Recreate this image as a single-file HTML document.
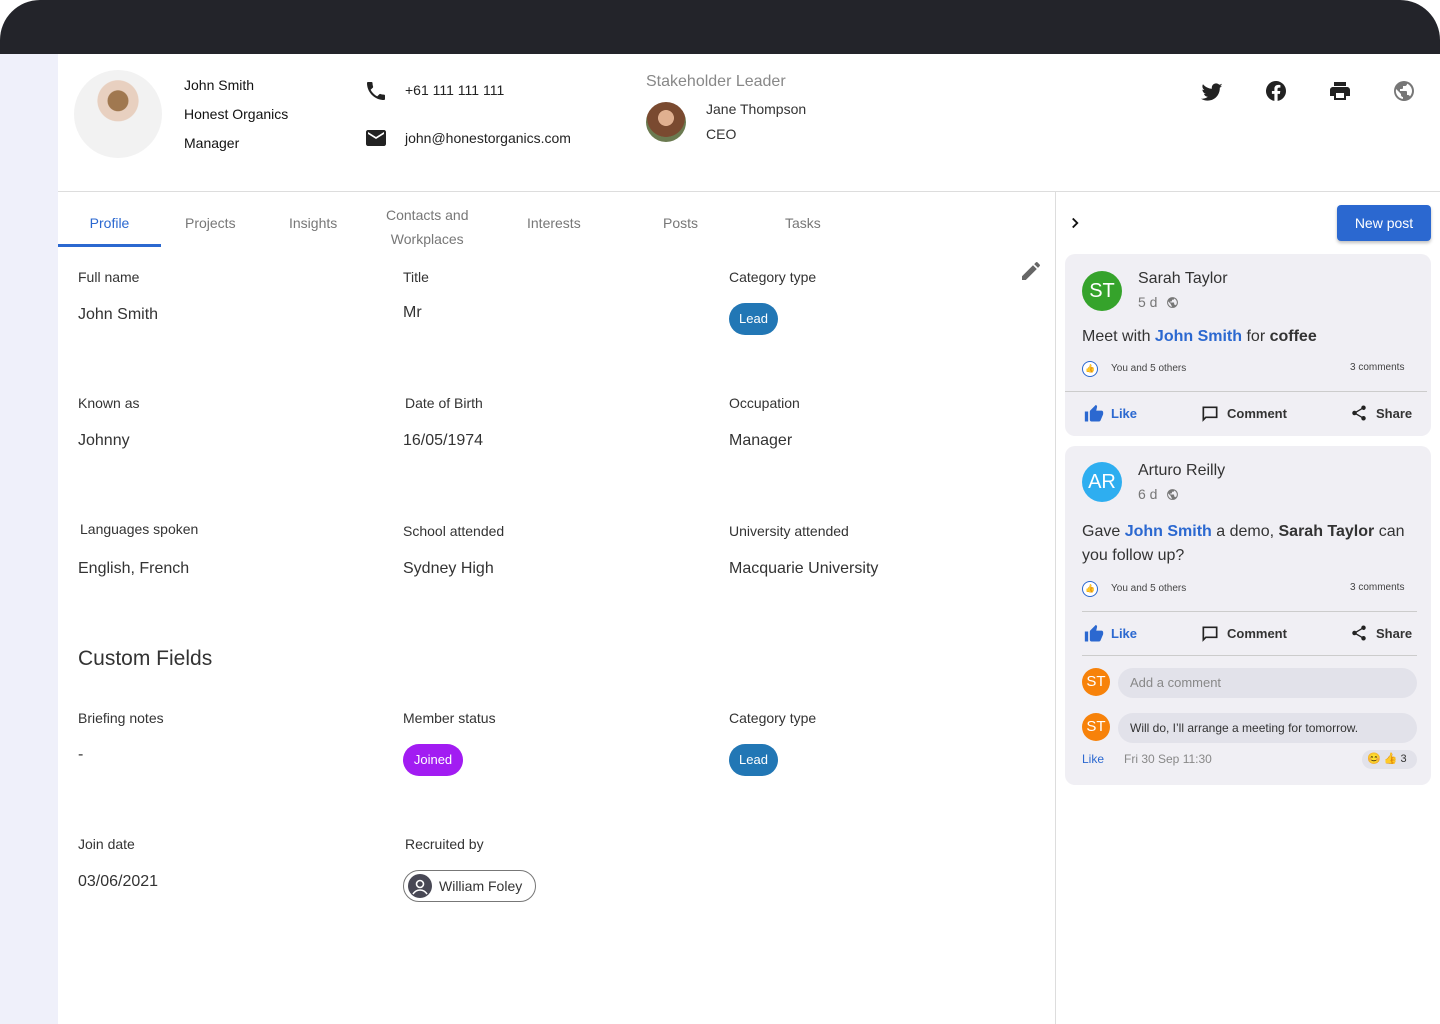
<!DOCTYPE html>
<html><head><meta charset="utf-8"><style>
*{margin:0;padding:0;box-sizing:border-box}
body{width:1440px;height:1024px;background:#fff;font-family:"Liberation Sans",Arial,sans-serif;color:#333;position:relative;overflow:hidden}
.a{position:absolute;white-space:nowrap}
.top{position:absolute;left:0;top:0;width:1440px;height:54px;background:#23242a;border-radius:40px 40px 0 0}
.side{position:absolute;left:0;top:54px;width:58px;height:970px;background:#eff0fa}
.lbl{font-size:14px;color:#333}
.val{font-size:16px;color:#333}
.tab{font-size:14px;color:#777;text-align:center}
.pill{position:absolute;height:32px;border-radius:16px;color:#fff;font-size:13px;line-height:32px;text-align:center}
.card{position:absolute;left:1065px;width:366px;background:#f0eff4;border-radius:10px}
.av{position:absolute;border-radius:50%;color:#fff;text-align:center}
.s{font-size:11px;color:#444}
.act{font-size:13px;color:#333;font-weight:bold}
</style></head><body>
<div class="top"></div>
<div class="side"></div>
<div class="a" style="left:58px;top:191px;width:1382px;height:1px;background:#ddd"></div>
<div class="a" style="left:1055px;top:192px;width:1px;height:832px;background:#ddd"></div>

<!-- header -->
<div class="a" style="left:74px;top:70px;width:88px;height:88px;border-radius:50%;background:radial-gradient(circle at 50% 35%,#a07850 0 14%,#e8d0c0 15% 28%,#f2f2f2 29%)"></div>
<div class="a" style="left:184px;top:77px;font-size:14px;color:#111">John Smith</div>
<div class="a" style="left:184px;top:106px;font-size:14px;color:#111">Honest Organics</div>
<div class="a" style="left:184px;top:135px;font-size:14px;color:#111">Manager</div>
<svg class="a" style="left:364px;top:79px" width="24" height="24" viewBox="0 0 24 24"><path fill="#222" d="M6.6 10.8c1.4 2.8 3.8 5.1 6.6 6.6l2.2-2.2c.3-.3.7-.4 1-.2 1.1.4 2.3.6 3.6.6.6 0 1 .4 1 1V20c0 .6-.4 1-1 1C10.6 21 3 13.4 3 4c0-.6.4-1 1-1h3.5c.6 0 1 .4 1 1 0 1.3.2 2.5.6 3.6.1.3 0 .7-.2 1z"/></svg>
<div class="a" style="left:405px;top:82px;font-size:14px;color:#222">+61 111 111 111</div>
<svg class="a" style="left:364px;top:126px" width="24" height="24" viewBox="0 0 24 24"><path fill="#222" d="M20 4H4c-1.1 0-2 .9-2 2v12c0 1.1.9 2 2 2h16c1.1 0 2-.9 2-2V6c0-1.1-.9-2-2-2zm0 4-8 5-8-5V6l8 5 8-5z"/></svg>
<div class="a" style="left:405px;top:130px;font-size:14px;color:#222">john@honestorganics.com</div>
<div class="a" style="left:646px;top:73px;font-size:16px;color:#888">Stakeholder Leader</div>
<div class="a" style="left:646px;top:102px;width:40px;height:40px;border-radius:50%;background:radial-gradient(circle at 50% 40%,#e0b090 0 25%,#7a4a30 26% 60%,#6b7a50 61%)"></div>
<div class="a" style="left:706px;top:101px;font-size:14px;color:#333">Jane Thompson</div>
<div class="a" style="left:706px;top:126px;font-size:14px;color:#333">CEO</div>
<svg class="a" style="left:1200px;top:80px" width="24" height="24" viewBox="0 0 24 24"><path fill="#222" d="M22.5 5.5c-.8.4-1.6.6-2.5.7.9-.5 1.6-1.4 1.9-2.4-.8.5-1.8.8-2.7 1-.8-.9-1.9-1.4-3.1-1.4-2.4 0-4.3 1.9-4.3 4.3 0 .3 0 .7.1 1-3.6-.2-6.8-1.9-8.9-4.5-.4.6-.6 1.4-.6 2.2 0 1.5.8 2.8 1.9 3.6-.7 0-1.4-.2-1.9-.5 0 2.1 1.5 3.9 3.4 4.2-.4.1-.7.2-1.1.2-.3 0-.5 0-.8-.1.5 1.7 2.1 3 4 3-1.5 1.2-3.3 1.9-5.3 1.9H1c1.9 1.2 4.2 1.9 6.6 1.9 7.9 0 12.2-6.5 12.2-12.2v-.6c.9-.6 1.6-1.3 2.2-2.2z"/></svg>
<svg class="a" style="left:1264px;top:79px" width="24" height="24" viewBox="0 0 24 24"><path fill="#222" d="M22 12a10 10 0 1 0-11.6 9.9v-7H7.9V12h2.5V9.8c0-2.5 1.5-3.9 3.8-3.9 1.1 0 2.2.2 2.2.2v2.5h-1.3c-1.2 0-1.6.8-1.6 1.6V12h2.8l-.4 2.9h-2.3v7A10 10 0 0 0 22 12z"/></svg>
<svg class="a" style="left:1328px;top:79px" width="24" height="24" viewBox="0 0 24 24"><path fill="#222" d="M19 8H5c-1.7 0-3 1.3-3 3v6h4v4h12v-4h4v-6c0-1.7-1.3-3-3-3zm-3 11H8v-5h8v5zM18 3H6v4h12z"/></svg>
<svg class="a" style="left:1392px;top:79px" width="24" height="24" viewBox="0 0 24 24"><path fill="#777" d="M12 2a10 10 0 1 0 0 20 10 10 0 0 0 0-20zm-1 17.9A8 8 0 0 1 4.1 10L9 15v1c0 1.1.9 2 2 2zm6.9-2.5c-.3-.8-1-1.4-1.9-1.4h-1v-3c0-.6-.4-1-1-1H8v-2h2c.6 0 1-.4 1-1V7h2c1.1 0 2-.9 2-2v-.4a8 8 0 0 1 2.9 12.8z"/></svg>

<!-- tabs -->
<div class="a tab" style="left:58px;top:215px;width:103px;color:#2b68d0">Profile</div>
<div class="a" style="left:58px;top:244px;width:103px;height:3px;background:#2b68d0"></div>
<div class="a tab" style="left:185px;top:215px">Projects</div>
<div class="a tab" style="left:289px;top:215px">Insights</div>
<div class="a tab" style="left:386px;top:203px;line-height:24px">Contacts and<br>Workplaces</div>
<div class="a tab" style="left:527px;top:215px">Interests</div>
<div class="a tab" style="left:663px;top:215px">Posts</div>
<div class="a tab" style="left:785px;top:215px">Tasks</div>
<svg class="a" style="left:1019px;top:259px" width="24" height="24" viewBox="0 0 24 24"><path fill="#666" d="M3 17.2V21h3.8L17.8 10l-3.8-3.8zM20.7 7c.4-.4.4-1 0-1.4l-2.3-2.3c-.4-.4-1-.4-1.4 0l-1.8 1.8 3.8 3.8z"/></svg>

<!-- fields -->
<div class="a lbl" style="left:78px;top:269px">Full name</div>
<div class="a val" style="left:78px;top:306px">John Smith</div>
<div class="a lbl" style="left:403px;top:269px">Title</div>
<div class="a val" style="left:403px;top:304px">Mr</div>
<div class="a lbl" style="left:729px;top:269px">Category type</div>
<div class="pill" style="left:729px;top:303px;width:49px;background:#2277b5">Lead</div>

<div class="a lbl" style="left:78px;top:395px">Known as</div>
<div class="a val" style="left:78px;top:432px">Johnny</div>
<div class="a lbl" style="left:405px;top:395px">Date of Birth</div>
<div class="a val" style="left:403px;top:432px">16/05/1974</div>
<div class="a lbl" style="left:729px;top:395px">Occupation</div>
<div class="a val" style="left:729px;top:432px">Manager</div>

<div class="a lbl" style="left:80px;top:521px">Languages spoken</div>
<div class="a val" style="left:78px;top:560px">English, French</div>
<div class="a lbl" style="left:403px;top:523px">School attended</div>
<div class="a val" style="left:403px;top:560px">Sydney High</div>
<div class="a lbl" style="left:729px;top:523px">University attended</div>
<div class="a val" style="left:729px;top:560px">Macquarie University</div>

<div class="a" style="left:78px;top:647px;font-size:21px;color:#333">Custom Fields</div>
<div class="a lbl" style="left:78px;top:710px">Briefing notes</div>
<div class="a val" style="left:78px;top:746px">-</div>
<div class="a lbl" style="left:403px;top:710px">Member status</div>
<div class="pill" style="left:403px;top:744px;width:60px;background:#a21cf2">Joined</div>
<div class="a lbl" style="left:729px;top:710px">Category type</div>
<div class="pill" style="left:729px;top:744px;width:49px;background:#2277b5">Lead</div>

<div class="a lbl" style="left:78px;top:836px">Join date</div>
<div class="a val" style="left:78px;top:873px">03/06/2021</div>
<div class="a lbl" style="left:405px;top:836px">Recruited by</div>
<div class="a" style="left:403px;top:870px;width:133px;height:32px;border:1px solid #777;border-radius:16px"></div>
<div class="a" style="left:408px;top:874px;width:24px;height:24px;border-radius:50%;background:#484855"></div>
<svg class="a" style="left:408px;top:874px" width="24" height="24" viewBox="0 0 24 24"><circle cx="12" cy="10" r="3.5" fill="none" stroke="#fff" stroke-width="1.6"/><path d="M5 20c2-3 4.5-4 7-4s5 1 7 4" fill="none" stroke="#fff" stroke-width="1.6"/></svg>
<div class="a" style="left:439px;top:878px;font-size:14px;color:#333">William Foley</div>

<!-- right panel -->
<svg class="a" style="left:1066px;top:214px" width="18" height="18" viewBox="0 0 24 24"><path fill="none" stroke="#111" stroke-width="2.5" d="M9 6l6 6-6 6"/></svg>
<div class="a" style="left:1337px;top:205px;width:94px;height:36px;background:#2b68d0;border-radius:4px;color:#fff;font-size:14px;line-height:36px;text-align:center;box-shadow:0 2px 3px rgba(0,0,0,.25)">New post</div>

<div class="card" style="top:254px;height:182px">
  <div class="av" style="left:17px;top:17px;width:40px;height:40px;background:#35a32b;font-size:20px;line-height:40px">ST</div>
  <div class="a" style="left:73px;top:16px;font-size:16px;color:#333">Sarah Taylor</div>
  <div class="a" style="left:73px;top:40px;font-size:14px;color:#777">5 d</div>
  <svg class="a" style="left:101px;top:42px" width="13" height="13" viewBox="0 0 24 24"><path fill="#777" d="M12 2a10 10 0 1 0 0 20 10 10 0 0 0 0-20zm-1 17.9A8 8 0 0 1 4.1 10L9 15v1c0 1.1.9 2 2 2zm6.9-2.5c-.3-.8-1-1.4-1.9-1.4h-1v-3c0-.6-.4-1-1-1H8v-2h2c.6 0 1-.4 1-1V7h2c1.1 0 2-.9 2-2v-.4a8 8 0 0 1 2.9 12.8z"/></svg>
  <div class="a" style="left:17px;top:74px;font-size:16px;color:#333">Meet with <b style="color:#2b68d0">John Smith</b> for <b>coffee</b></div>
  <div class="a" style="left:17px;top:107px;width:16px;height:16px;border:1px solid #2b68d0;border-radius:50%;background:#fff;font-size:8px;text-align:center;line-height:14px">👍</div>
  <div class="a s" style="left:46px;top:109px;font-size:10px">You and 5 others</div>
  <div class="a s" style="left:285px;top:108px;font-size:10px">3 comments</div>
  <div class="a" style="left:0;top:137px;width:362px;height:1px;background:#ccc"></div>
  <svg class="a" style="left:19px;top:150px" width="20" height="20" viewBox="0 0 24 24"><path fill="#2b68d0" d="M1 21h4V9H1zm22-11c0-1.1-.9-2-2-2h-6.3l1-4.6v-.3c0-.4-.2-.8-.4-1.1L14.2 1 7.6 7.6C7.2 7.9 7 8.4 7 9v10c0 1.1.9 2 2 2h9c.8 0 1.5-.5 1.8-1.2l3-7.1c.1-.2.2-.5.2-.7z"/></svg>
  <div class="a act" style="left:46px;top:152px;color:#2b68d0">Like</div>
  <svg class="a" style="left:135px;top:150px" width="20" height="20" viewBox="0 0 24 24"><path fill="none" stroke="#222" stroke-width="2" d="M4 4h16v12H7l-3 3z"/></svg>
  <div class="a act" style="left:162px;top:152px">Comment</div>
  <svg class="a" style="left:285px;top:150px" width="18" height="18" viewBox="0 0 24 24"><path fill="#222" d="M18 16c-.8 0-1.5.3-2 .8l-7.1-4.2c.1-.2.1-.4.1-.6s0-.4-.1-.6L16 7.2c.5.5 1.2.8 2 .8 1.7 0 3-1.3 3-3s-1.3-3-3-3-3 1.3-3 3c0 .2 0 .4.1.6L8 9.8C7.5 9.3 6.8 9 6 9c-1.7 0-3 1.3-3 3s1.3 3 3 3c.8 0 1.5-.3 2-.8l7.1 4.2c-.1.2-.1.4-.1.6 0 1.6 1.3 3 3 3s3-1.3 3-3-1.3-3-3-3z"/></svg>
  <div class="a act" style="left:311px;top:152px">Share</div>
</div>

<div class="card" style="top:446px;height:339px">
  <div class="av" style="left:17px;top:16px;width:40px;height:40px;background:#2eaef0;font-size:20px;line-height:40px">AR</div>
  <div class="a" style="left:73px;top:16px;font-size:16px;color:#333">Arturo Reilly</div>
  <div class="a" style="left:73px;top:40px;font-size:14px;color:#777">6 d</div>
  <svg class="a" style="left:101px;top:42px" width="13" height="13" viewBox="0 0 24 24"><path fill="#777" d="M12 2a10 10 0 1 0 0 20 10 10 0 0 0 0-20zm-1 17.9A8 8 0 0 1 4.1 10L9 15v1c0 1.1.9 2 2 2zm6.9-2.5c-.3-.8-1-1.4-1.9-1.4h-1v-3c0-.6-.4-1-1-1H8v-2h2c.6 0 1-.4 1-1V7h2c1.1 0 2-.9 2-2v-.4a8 8 0 0 1 2.9 12.8z"/></svg>
  <div class="a" style="left:17px;top:74px;font-size:16px;color:#333;line-height:24px;white-space:normal;width:335px">Gave <b style="color:#2b68d0">John Smith</b> a demo, <b>Sarah Taylor</b> can you follow up?</div>
  <div class="a" style="left:17px;top:135px;width:16px;height:16px;border:1px solid #2b68d0;border-radius:50%;background:#fff;font-size:8px;text-align:center;line-height:14px">👍</div>
  <div class="a s" style="left:46px;top:137px;font-size:10px">You and 5 others</div>
  <div class="a s" style="left:285px;top:136px;font-size:10px">3 comments</div>
  <div class="a" style="left:17px;top:165px;width:335px;height:1px;background:#ccc"></div>
  <svg class="a" style="left:19px;top:178px" width="20" height="20" viewBox="0 0 24 24"><path fill="#2b68d0" d="M1 21h4V9H1zm22-11c0-1.1-.9-2-2-2h-6.3l1-4.6v-.3c0-.4-.2-.8-.4-1.1L14.2 1 7.6 7.6C7.2 7.9 7 8.4 7 9v10c0 1.1.9 2 2 2h9c.8 0 1.5-.5 1.8-1.2l3-7.1c.1-.2.2-.5.2-.7z"/></svg>
  <div class="a act" style="left:46px;top:180px;color:#2b68d0">Like</div>
  <svg class="a" style="left:135px;top:178px" width="20" height="20" viewBox="0 0 24 24"><path fill="none" stroke="#222" stroke-width="2" d="M4 4h16v12H7l-3 3z"/></svg>
  <div class="a act" style="left:162px;top:180px">Comment</div>
  <svg class="a" style="left:285px;top:178px" width="18" height="18" viewBox="0 0 24 24"><path fill="#222" d="M18 16c-.8 0-1.5.3-2 .8l-7.1-4.2c.1-.2.1-.4.1-.6s0-.4-.1-.6L16 7.2c.5.5 1.2.8 2 .8 1.7 0 3-1.3 3-3s-1.3-3-3-3-3 1.3-3 3c0 .2 0 .4.1.6L8 9.8C7.5 9.3 6.8 9 6 9c-1.7 0-3 1.3-3 3s1.3 3 3 3c.8 0 1.5-.3 2-.8l7.1 4.2c-.1.2-.1.4-.1.6 0 1.6 1.3 3 3 3s3-1.3 3-3-1.3-3-3-3z"/></svg>
  <div class="a act" style="left:311px;top:180px">Share</div>
  <div class="a" style="left:17px;top:209px;width:335px;height:1px;background:#ccc"></div>
  <div class="av" style="left:17px;top:222px;width:28px;height:28px;background:#f7820a;font-size:15px;line-height:28px">ST</div>
  <div class="a" style="left:53px;top:222px;width:299px;height:30px;border-radius:15px;background:#e2e2ea;font-size:13px;color:#888;line-height:30px;padding-left:12px">Add a comment</div>
  <div class="av" style="left:17px;top:267px;width:28px;height:28px;background:#f7820a;font-size:15px;line-height:28px">ST</div>
  <div class="a" style="left:53px;top:267px;width:299px;height:30px;border-radius:15px;background:#e2e2ea;font-size:12px;color:#333;line-height:30px;padding-left:12px">Will do, I’ll arrange a meeting for tomorrow.</div>
  <div class="a" style="left:17px;top:306px;font-size:12px;color:#2b68d0">Like</div>
  <div class="a" style="left:59px;top:306px;font-size:12px;color:#888">Fri 30 Sep 11:30</div>
  <div class="a" style="left:297px;top:304px;width:55px;height:19px;border-radius:10px;background:#e2e2ea;font-size:11px;line-height:19px;padding-left:5px">😊 👍 3</div>
</div>
</body></html>
